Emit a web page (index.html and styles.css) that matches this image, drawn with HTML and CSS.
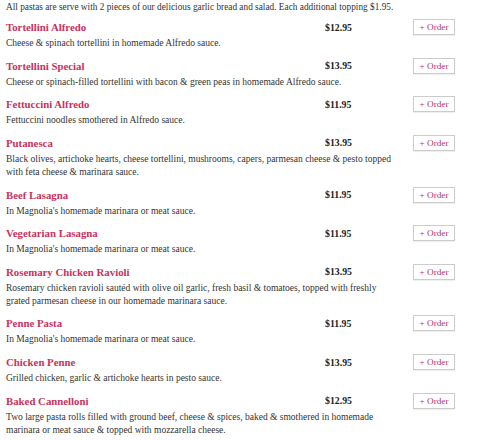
FILE: index.html
```html
<!DOCTYPE html>
<html>
<head>
<meta charset="utf-8">
<link rel="stylesheet" href="styles.css">
</head>
<body>
<div class="menu">
  <p class="intro">All pastas are serve with 2 pieces of our delicious garlic bread and salad. Each additional topping $1.95.</p>

  <div class="item">
    <div class="row"><h3 class="name">Tortellini Alfredo</h3><span class="price">$12.95</span><button class="order">+ Order</button></div>
    <p class="desc">Cheese &amp; spinach tortellini in homemade Alfredo sauce.</p>
  </div>

  <div class="item">
    <div class="row"><h3 class="name">Tortellini Special</h3><span class="price">$13.95</span><button class="order">+ Order</button></div>
    <p class="desc">Cheese or spinach-filled tortellini with bacon &amp; green peas in homemade Alfredo sauce.</p>
  </div>

  <div class="item">
    <div class="row"><h3 class="name">Fettuccini Alfredo</h3><span class="price">$11.95</span><button class="order">+ Order</button></div>
    <p class="desc">Fettuccini noodles smothered in Alfredo sauce.</p>
  </div>

  <div class="item">
    <div class="row"><h3 class="name">Putanesca</h3><span class="price">$13.95</span><button class="order">+ Order</button></div>
    <p class="desc">Black olives, artichoke hearts, cheese tortellini, mushrooms, capers, parmesan cheese &amp; pesto topped<br>with feta cheese &amp; marinara sauce.</p>
  </div>

  <div class="item">
    <div class="row"><h3 class="name">Beef Lasagna</h3><span class="price">$11.95</span><button class="order">+ Order</button></div>
    <p class="desc">In Magnolia's homemade marinara or meat sauce.</p>
  </div>

  <div class="item">
    <div class="row"><h3 class="name">Vegetarian Lasagna</h3><span class="price">$11.95</span><button class="order">+ Order</button></div>
    <p class="desc">In Magnolia's homemade marinara or meat sauce.</p>
  </div>

  <div class="item">
    <div class="row"><h3 class="name">Rosemary Chicken Ravioli</h3><span class="price">$13.95</span><button class="order">+ Order</button></div>
    <p class="desc">Rosemary chicken ravioli sautéd with olive oil garlic, fresh basil &amp; tomatoes, topped with freshly<br>grated parmesan cheese in our homemade marinara sauce.</p>
  </div>

  <div class="item">
    <div class="row"><h3 class="name">Penne Pasta</h3><span class="price">$11.95</span><button class="order">+ Order</button></div>
    <p class="desc">In Magnolia's homemade marinara or meat sauce.</p>
  </div>

  <div class="item">
    <div class="row"><h3 class="name">Chicken Penne</h3><span class="price">$13.95</span><button class="order">+ Order</button></div>
    <p class="desc">Grilled chicken, garlic &amp; artichoke hearts in pesto sauce.</p>
  </div>

  <div class="item">
    <div class="row"><h3 class="name">Baked Cannelloni</h3><span class="price">$12.95</span><button class="order">+ Order</button></div>
    <p class="desc">Two large pasta rolls filled with ground beef, cheese &amp; spices, baked &amp; smothered in homemade<br>marinara or meat sauce &amp; topped with mozzarella cheese.</p>
  </div>
</div>
</body>
</html>
```

FILE: styles.css
```css
html, body {
  margin: 0;
  padding: 0;
  background: #ffffff;
}

.menu {
  padding: 0 0 0 6px;
  width: 494px;
  font-family: "Liberation Serif", "DejaVu Serif", serif;
  color: #333333;
}

.intro {
  margin: 0 0 5px 0;
  font-size: 9.3px;
  line-height: 14px;
  white-space: nowrap;
}

.item {
  margin-bottom: 7.65px;
}

.row {
  display: grid;
  grid-template-columns: 319px 88px 42px;
  align-items: center;
  height: 16px;
}

.name {
  margin: 0;
  font-size: 10.8px;
  line-height: 16px;
  font-weight: bold;
  color: #c8325e;
}

.price {
  font-size: 9.8px;
  font-weight: bold;
  color: #222222;
}

.order {
  box-sizing: border-box;
  width: 42px;
  height: 16px;
  padding: 0;
  margin: 0;
  background: #ffffff;
  border: 1px solid #cccccc;
  border-radius: 0;
  box-shadow: 0 1px 1px rgba(0, 0, 0, 0.06);
  font-family: "Liberation Serif", "DejaVu Serif", serif;
  font-size: 9.2px;
  line-height: 14px;
  color: #b3366a;
  cursor: pointer;
}

.desc {
  margin: 2px 0 0 0;
  font-size: 9.5px;
  line-height: 13px;
  white-space: nowrap;
}
```
